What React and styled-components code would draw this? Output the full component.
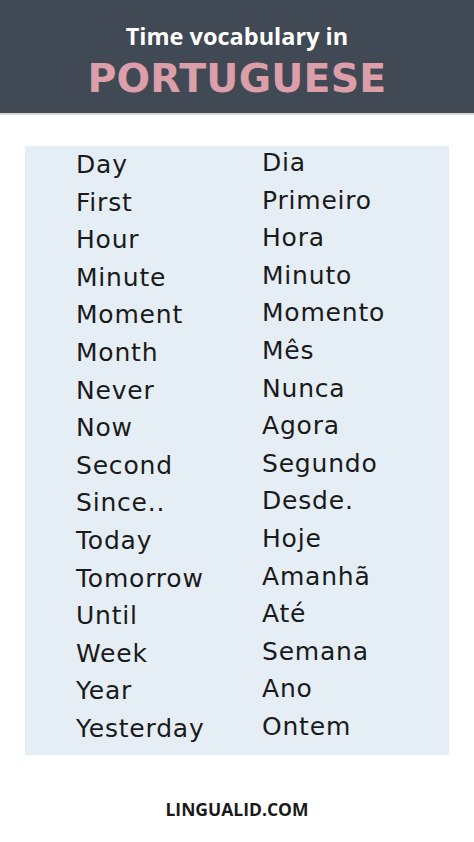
import { Fragment } from "react"
import styled, { createGlobalStyle } from "styled-components"

const Global = createGlobalStyle`
html, body {
  margin:0;
  padding:0;
  background:#ffffff;
}
`

const Page = styled.div`
width:474px;
height:842px;
display:flex;
flex-direction:column;
background:#ffffff;
font-family:"Open Sans", "Noto Sans", sans-serif;
`

const Header = styled.header`
height:115px;
background-color:#414955;
border-bottom:2px solid #d6d8dc;
display:flex;
flex-direction:column;
align-items:center;
padding-top:20px;
box-sizing:border-box;
`

const Title = styled.h1`
margin:0;
color:#ffffff;
font-size:23.5px;
font-weight:700;
line-height:32px;
`

const Language = styled.h2`
margin:3px 0 0 0;
color:#dc9ea8;
font-family:"DejaVu Sans", sans-serif;
font-size:39.5px;
font-weight:700;
line-height:46px;
letter-spacing:0.2px;
`

const Panel = styled.section`
margin:31px 25px 0 25px;
background-color:#e6eef5;
padding:0 0 0 51px;
display:grid;
grid-template-columns:186px 1fr;
grid-auto-rows:37.6px;
height:609px;
box-sizing:border-box;
`

const Word = styled.span`
font-family:"DejaVu Sans", sans-serif;
font-size:25px;
color:#1a1a1a;
line-height:37.6px;
letter-spacing:0.8px;
transform:translateY(${p => (p.$pt ? "-2px" : "0")});
`

const Footer = styled.footer`
flex:1;
display:flex;
align-items:center;
justify-content:center;
padding-top:20px;
font-size:17.5px;
font-weight:700;
color:#1a1a1a;
`

const words = [
  ["Day", "Dia"],
  ["First", "Primeiro"],
  ["Hour", "Hora"],
  ["Minute", "Minuto"],
  ["Moment", "Momento"],
  ["Month", "Mês"],
  ["Never", "Nunca"],
  ["Now", "Agora"],
  ["Second", "Segundo"],
  ["Since..", "Desde."],
  ["Today", "Hoje"],
  ["Tomorrow", "Amanhã"],
  ["Until", "Até"],
  ["Week", "Semana"],
  ["Year", "Ano"],
  ["Yesterday", "Ontem"],
]

const App = () => {
  return (
    <Page>
      <Global />
      <Header>
        <Title>Time vocabulary in</Title>
        <Language>PORTUGUESE</Language>
      </Header>
      <Panel>
        {words.map(([en, pt]) => (
          <Fragment key={en}>
            <Word>{en}</Word>
            <Word $pt>{pt}</Word>
          </Fragment>
        ))}
      </Panel>
      <Footer>LINGUALID.COM</Footer>
    </Page>
  )
}

export default App
